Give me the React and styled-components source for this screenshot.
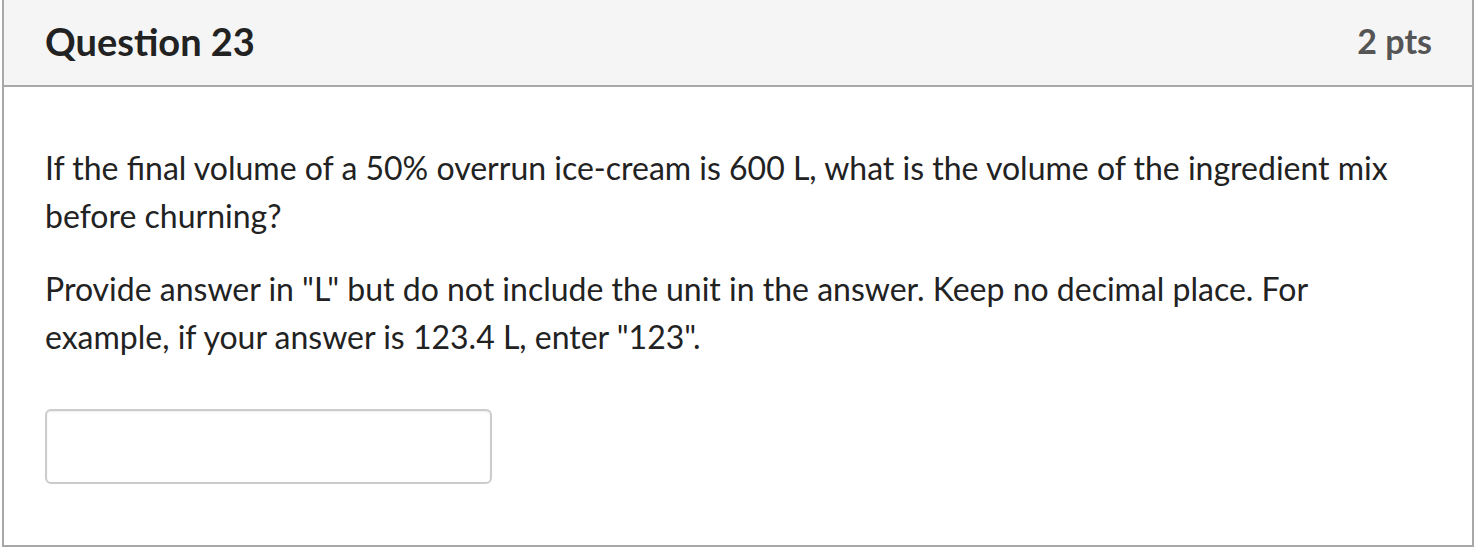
import React from 'react'
import styled, { createGlobalStyle } from 'styled-components'

const GlobalStyle = createGlobalStyle`
  html, body {
    margin: 0;
    padding: 0;
    background: #ffffff;
  }
  body {
    font-family: Lato, "Liberation Sans", sans-serif;
    color: #2d3b45;
  }
`

export default function App() {
  return (
    <>
      <GlobalStyle />
      <StyledPage>
        <StyledCard>
          <StyledHeader>
            <StyledTitle>Question 23</StyledTitle>
            <StyledPoints>2 pts</StyledPoints>
          </StyledHeader>
          <StyledBody>
            <StyledText>
              If the final volume of a 50% overrun ice-cream is 600 L, what is the volume of the ingredient mix before churning?
            </StyledText>
            <StyledText>
              Provide answer in "L" but do not include the unit in the answer. Keep no decimal place. For example, if your answer is 123.4 L, enter "123".
            </StyledText>
            <StyledInput type="text" />
          </StyledBody>
        </StyledCard>
      </StyledPage>
    </>
  )
}

const StyledPage = styled('div')`
  padding: 0 0 7px 2px;
`

const StyledCard = styled('section')`
  border: 2px solid #a8a8a8;
  border-top: none;
  background: #ffffff;
`

const StyledHeader = styled('header')`
  display: flex;
  align-items: center;
  justify-content: space-between;
  height: 81px;
  padding: 0 40px 4px 41px;
  background: #f5f5f5;
  border-bottom: 2px solid #a8a8a8;
`

const StyledTitle = styled('h2')`
  margin: 0;
  font-size: 38px;
  font-weight: 700;
  color: #222222;
`

const StyledPoints = styled('span')`
  font-size: 34px;
  font-weight: 700;
  color: #555555;
`

const StyledBody = styled('div')`
  padding: 57px 41px 61px;
`

const StyledText = styled('p')`
  margin: 0 0 25px;
  font-size: 32px;
  line-height: 48px;
  color: #222222;
`

const StyledInput = styled('input')`
  display: block;
  box-sizing: border-box;
  width: 447px;
  height: 75px;
  margin-top: 48px;
  border: 2px solid #cccccc;
  border-radius: 6px;
  box-shadow: inset 0 1px 2px rgba(0, 0, 0, 0.08);
  background: #ffffff;
  outline: none;
`
